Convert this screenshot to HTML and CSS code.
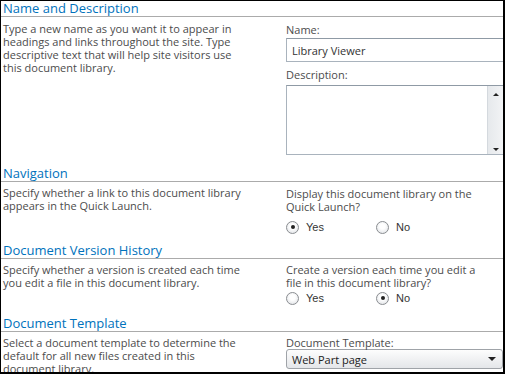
FILE: index.html
```html
<!DOCTYPE html>
<html lang="en">
<head>
    <meta charset="UTF-8">
    <title>Document Library Settings</title>
    <link rel="stylesheet" href="styles.css">
</head>
<body>
    <div class="frame">
        <section class="section section-name">
            <h2 class="section-title">Name and Description</h2>
            <div class="section-body">
                <p class="section-desc">Type a new name as you want it to appear in<br>headings and links throughout the site. Type<br>descriptive text that will help site visitors use<br>this document library.</p>
                <div class="section-controls">
                    <div class="field-label">Name:</div>
                    <input class="text-input" type="text" value="Library Viewer">
                    <div class="field-label field-label-spaced">Description:</div>
                    <div class="textarea">
                        <div class="textarea-content"></div>
                        <div class="scrollbar">
                            <span class="arrow arrow-up"></span>
                            <span class="arrow arrow-down"></span>
                        </div>
                    </div>
                </div>
            </div>
        </section>

        <section class="section section-nav">
            <h2 class="section-title">Navigation</h2>
            <div class="section-body">
                <p class="section-desc">Specify whether a link to this document library<br>appears in the Quick Launch.</p>
                <div class="section-controls">
                    <div class="field-label">Display this document library on the<br>Quick Launch?</div>
                    <div class="radio-row">
                        <span class="radio-option"><span class="radio checked"></span>Yes</span>
                        <span class="radio-option"><span class="radio"></span>No</span>
                    </div>
                </div>
            </div>
        </section>

        <section class="section section-version">
            <h2 class="section-title">Document Version History</h2>
            <div class="section-body">
                <p class="section-desc">Specify whether a version is created each time<br>you edit a file in this document library.</p>
                <div class="section-controls">
                    <div class="field-label">Create a version each time you edit a<br>file in this document library?</div>
                    <div class="radio-row">
                        <span class="radio-option"><span class="radio"></span>Yes</span>
                        <span class="radio-option"><span class="radio checked"></span>No</span>
                    </div>
                </div>
            </div>
        </section>

        <section class="section section-template">
            <h2 class="section-title">Document Template</h2>
            <div class="section-body">
                <p class="section-desc">Select a document template to determine the<br>default for all new files created in this<br>document library.</p>
                <div class="section-controls">
                    <div class="field-label">Document Template:</div>
                    <div class="select">
                        <span>Web Part page</span>
                        <span class="select-arrow"></span>
                    </div>
                </div>
            </div>
        </section>
    </div>
</body>
</html>
```

FILE: styles.css
```css
:root {
    --title-color: #0072bc;
    --text-color: #4c4c4c;
    --rule-color: #ababab;
    --field-border: #a9b3bd;
}

* {
    margin: 0;
    padding: 0;
    box-sizing: border-box;
}

body {
    margin: 0;
    font-family: "Open Sans", "Liberation Sans", sans-serif;
    color: var(--text-color);
    background: #fff;
}

.frame {
    width: 505px;
    height: 374px;
    border-style: solid;
    border-color: #000;
    border-width: 1px 2px 2px 1px;
    overflow: hidden;
}

.section-title {
    font-size: 13px;
    font-weight: normal;
    line-height: 14px;
    color: var(--title-color);
    padding: 0 0 1px 2px;
    border-bottom: 1px solid var(--rule-color);
}

.section-body {
    display: flex;
    padding-left: 2px;
    font-size: 11px;
    line-height: 13px;
}

.section-desc {
    width: 262px;
    flex-shrink: 0;
    margin-right: 21px;
    white-space: nowrap;
}

.section-controls {
    flex: 1;
    min-width: 0;
}

/* per-section spacing */
.section-name .section-desc { padding-top: 5px; }
.section-name .section-controls { padding-top: 6px; }
.section-nav { margin-top: 11px; }
.section-nav .section-body { padding-top: 4px; }
.section-nav .section-controls { padding-top: 1px; }
.section-version { margin-top: 9px; }
.section-version .section-body { padding-top: 4px; }
.section-template { margin-top: 11px; }
.section-template .section-body { padding-top: 4px; }

.field-label {
    white-space: nowrap;
}

.field-label-spaced {
    margin-top: 6px;
}

.text-input {
    display: block;
    width: 240px;
    height: 24px;
    margin-top: 2px;
    padding: 0 5px;
    border: 1px solid var(--field-border);
    border-top-color: #8f9aa5;
    font-family: inherit;
    font-size: 11px;
    color: #333;
    background: #fff;
    outline: none;
}

.textarea {
    display: flex;
    width: 218px;
    height: 70px;
    margin-top: 4px;
    border: 1px solid var(--field-border);
    border-top-color: #8f9aa5;
    background: #fff;
}

.textarea-content {
    flex: 1;
}

.scrollbar {
    width: 16px;
    display: flex;
    flex-direction: column;
    justify-content: space-between;
    align-items: center;
    padding: 7px 0 3px;
    background: linear-gradient(to right, #e6e9ec, #f2f3f5);
    border-left: 1px solid #d4d9de;
}

.arrow {
    width: 0;
    height: 0;
    border-left: 3px solid transparent;
    border-right: 3px solid transparent;
}

.arrow-up {
    border-bottom: 3px solid #222;
}

.arrow-down {
    border-top: 3px solid #222;
}

.radio-row {
    display: flex;
    align-items: center;
    height: 14px;
}

.section-nav .radio-row { margin-top: 7px; }
.section-version .radio-row { margin-top: 2px; }

.radio-option {
    display: flex;
    align-items: center;
    width: 90px;
    font-family: "Liberation Sans", sans-serif;
    font-size: 11px;
    color: #333;
}

.radio {
    display: flex;
    align-items: center;
    justify-content: center;
    width: 13px;
    height: 13px;
    margin-right: 7px;
    border: 1px solid #8a8d91;
    border-radius: 50%;
    background: radial-gradient(circle at 50% 40%, #fff 30%, #dadde1 100%);
}

.radio.checked::after {
    content: "";
    width: 4px;
    height: 4px;
    border-radius: 50%;
    background: #222;
}

.select {
    display: flex;
    align-items: center;
    justify-content: space-between;
    width: 217px;
    height: 20px;
    padding: 0 6px 0 5px;
    border: 1px solid #9fa3a8;
    border-radius: 3px;
    background: linear-gradient(to bottom, #fdfdfd, #e4e6e9);
    color: #222;
}

.select-arrow {
    width: 0;
    height: 0;
    border-left: 4px solid transparent;
    border-right: 4px solid transparent;
    border-top: 4px solid #222;
}
```
